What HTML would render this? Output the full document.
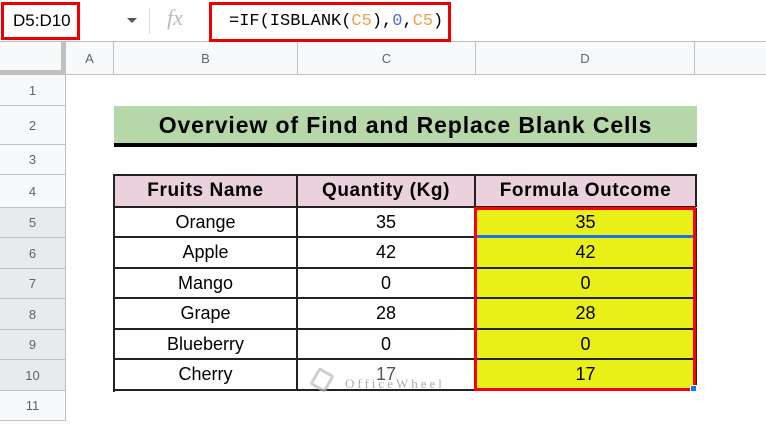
<!DOCTYPE html>
<html><head><style>
body{margin:0;width:766px;height:425px;overflow:hidden;background:#fff;font-family:"Liberation Sans",Arial,sans-serif;position:relative}
div{position:absolute;box-sizing:border-box}
.rh{left:0;width:66px;background:#f8f9fa;border-bottom:1px solid #c0c0c0;border-right:1px solid #c0c0c0;color:#5f6368;font-size:13px;text-align:center}
.sel{background:#e8eaed}
.ch{top:42px;height:33px;background:#f8f9fa;border-right:1px solid #c0c0c0;border-bottom:1px solid #c0c0c0;color:#5f6368;font-size:13px;text-align:center;line-height:33px}
.c{font-size:18px;text-align:center;color:#000;border-bottom:2px solid #222;border-right:2px solid #222}
.h{font-size:19px;letter-spacing:0.6px}
</style></head><body>
<div style="left:0;top:0;width:766px;height:42px;background:#fff;border-bottom:1px solid #c0c0c0"></div>
<div style="left:1px;top:2px;width:79px;height:38px;border:3px solid #e00;font-size:17px;line-height:32px;padding-left:9px">D5:D10</div>
<div style="left:127px;top:18px;width:0;height:0;border-left:5px solid transparent;border-right:5px solid transparent;border-top:5px solid #555"></div>
<div style="left:149px;top:8px;width:1px;height:26px;background:#ddd"></div>
<div style="left:167px;top:5px;font-family:'Liberation Serif',serif;font-style:italic;font-size:22px;color:#bbb">fx</div>
<div style="left:209px;top:2px;width:242px;height:40px;border:3px solid #e00;font-family:'Liberation Mono',monospace;font-size:17px;line-height:34px;padding-left:17px;color:#000">=IF(ISBLANK(<span style="color:#f0a050">C5</span>),<span style="color:#5070e0">0</span>,<span style="color:#f0a050">C5</span>)</div>
<div style="left:0;top:42px;width:66px;height:33px;background:#f8f9fa;border-right:5px solid #c0c0c0;border-bottom:5px solid #c0c0c0"></div>
<div class="ch" style="left:66px;width:48px">A</div>
<div class="ch" style="left:114px;width:184px">B</div>
<div class="ch" style="left:298px;width:178px">C</div>
<div class="ch" style="left:476px;width:219px">D</div>
<div class="ch" style="left:695px;width:71px;border-right:none"></div>
<div class="rh" style="top:75px;height:31px;line-height:31px">1</div>
<div class="rh" style="top:106px;height:39px;line-height:39px">2</div>
<div class="rh" style="top:145px;height:30px;line-height:30px">3</div>
<div class="rh" style="top:175px;height:33px;line-height:33px">4</div>
<div class="rh sel" style="top:208px;height:30px;line-height:30px">5</div>
<div class="rh sel" style="top:238px;height:31px;line-height:31px">6</div>
<div class="rh sel" style="top:269px;height:30px;line-height:30px">7</div>
<div class="rh sel" style="top:299px;height:31px;line-height:31px">8</div>
<div class="rh sel" style="top:330px;height:30px;line-height:30px">9</div>
<div class="rh sel" style="top:360px;height:31px;line-height:31px">10</div>
<div class="rh" style="top:391px;height:30px;line-height:30px">11</div>
<div style="left:114px;top:106px;width:583px;height:41px;background:#b6d7a8;border-bottom:4px solid #000;font-size:23px;letter-spacing:0.9px;font-weight:bold;text-align:center;line-height:38px">Overview of Find and Replace Blank Cells</div>
<div style="left:113px;top:174px;width:584px;height:218px;border-left:2px solid #222;border-top:2px solid #222"></div>
<div class="c h" style="left:115px;top:176px;width:183px;height:32px;background:#ead1dc;font-weight:bold;line-height:30px">Fruits Name</div>
<div class="c h" style="left:298px;top:176px;width:178px;height:32px;background:#ead1dc;font-weight:bold;line-height:30px">Quantity (Kg)</div>
<div class="c h" style="left:476px;top:176px;width:221px;height:32px;background:#ead1dc;font-weight:bold;line-height:30px">Formula Outcome</div>
<div class="c" style="left:115px;top:208px;width:183px;height:30px;line-height:28px">Orange</div><div class="c" style="left:298px;top:208px;width:178px;height:30px;line-height:28px">35</div>
<div class="c" style="left:115px;top:238px;width:183px;height:31px;line-height:29px">Apple</div><div class="c" style="left:298px;top:238px;width:178px;height:31px;line-height:29px">42</div>
<div class="c" style="left:115px;top:269px;width:183px;height:30px;line-height:28px">Mango</div><div class="c" style="left:298px;top:269px;width:178px;height:30px;line-height:28px">0</div>
<div class="c" style="left:115px;top:299px;width:183px;height:31px;line-height:29px">Grape</div><div class="c" style="left:298px;top:299px;width:178px;height:31px;line-height:29px">28</div>
<div class="c" style="left:115px;top:330px;width:183px;height:30px;line-height:28px">Blueberry</div><div class="c" style="left:298px;top:330px;width:178px;height:30px;line-height:28px">0</div>
<div class="c" style="left:115px;top:360px;width:183px;height:31px;line-height:29px">Cherry</div><div class="c" style="left:298px;top:360px;width:178px;height:31px;line-height:29px;color:#555">17</div>
<div style="left:474px;top:207px;width:223px;height:184px;background:#e8f017"></div>
<div class="c" style="left:476px;top:208px;width:221px;height:30px;line-height:28px;border-bottom:3px solid #1a73e8">35</div>
<div class="c" style="left:476px;top:238px;width:221px;height:31px;line-height:29px">42</div>
<div class="c" style="left:476px;top:269px;width:221px;height:30px;line-height:28px">0</div>
<div class="c" style="left:476px;top:299px;width:221px;height:31px;line-height:29px">28</div>
<div class="c" style="left:476px;top:330px;width:221px;height:30px;line-height:28px">0</div>
<div class="c" style="left:476px;top:360px;width:221px;height:31px;line-height:29px">17</div>
<div style="left:474px;top:207px;width:222px;height:184px;border:3px solid #f00"></div>
<div style="left:690px;top:385px;width:7px;height:7px;background:#1a73e8;border:1px solid #fff"></div>
<div style="left:313px;top:370px;width:18px;height:20px;border:3px solid #bbb;border-radius:3px;transform:rotate(30deg);opacity:.7"></div>
<div style="left:345px;top:376px;font-family:'Liberation Serif',serif;font-size:13px;letter-spacing:3px;color:#aaa">OfficeWheel</div>
</body></html>
